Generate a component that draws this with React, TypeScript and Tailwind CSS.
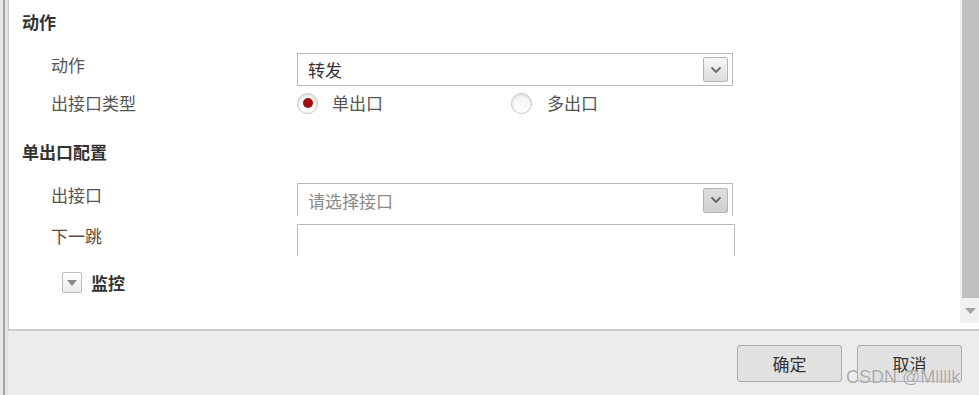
import React from "react";

const cjk = { fontFamily: '"Noto Sans CJK SC", "Liberation Sans", sans-serif' };

function Chevron({ dark }: { dark?: boolean }) {
  return (
    <div
      className={
        "flex h-[25px] w-[25px] items-center justify-center rounded-[2px] border border-[#b4b4b4] " +
        (dark ? "bg-gradient-to-b from-[#dedede] to-[#cfcfcf]" : "bg-gradient-to-b from-[#f6f6f6] to-[#dcdcdc]")
      }
    >
      <svg width="12" height="8" viewBox="0 0 12 8">
        <path d="M1.5 1.5 L6 6 L10.5 1.5" fill="none" stroke="#666" strokeWidth="1.8" />
      </svg>
    </div>
  );
}

function Radio({ checked }: { checked?: boolean }) {
  return (
    <div className="flex h-[21px] w-[21px] items-center justify-center rounded-full border border-[#c4c4c4] bg-gradient-to-b from-[#f2f2f2] to-white shadow-[inset_0_1px_2px_rgba(0,0,0,0.12)]">
      {checked && <div className="h-[10px] w-[10px] rounded-full bg-[#a30d0d]" />}
    </div>
  );
}

export default function App() {
  return (
    <div className="relative flex h-[395px] w-[979px] overflow-hidden bg-[#ececec] text-[17px]" style={cjk}>
      <div className="w-[3px] shrink-0 bg-[#e8e8e8]" />
      <div className="w-[2px] shrink-0 bg-[#a4a4a4]" />
      <div className="w-[3px] shrink-0 bg-[#e3e3e3]" />
      <div className="flex min-w-0 flex-1 flex-col">
        {/* panel */}
        <div className="flex h-[331px] shrink-0 border-b-2 border-l border-[#cbcbcb] bg-white">
          <div className="flex min-w-0 flex-1 flex-col pl-[13px]">
            <div className="flex h-[42px] items-center font-bold leading-none text-[#333]">动作</div>

            <div className="mt-[11px] flex items-start">
              <div className="ml-[29px] w-[246px] leading-[24px] text-[#555]">动作</div>
              <div className="flex h-[33px] w-[436px] items-center justify-between border border-[#b9b9b9] pl-[10px] pr-[4px]">
                <span className="leading-none text-[#333]">转发</span>
                <Chevron />
              </div>
            </div>

            <div className="mt-[5px] flex h-[24px] items-center">
              <div className="ml-[29px] w-[246px] leading-[24px] text-[#555]">出接口类型</div>
              <div className="flex w-[214px] items-center">
                <Radio checked />
                <span className="ml-[14px] text-[#555]">单出口</span>
              </div>
              <div className="flex items-center">
                <Radio />
                <span className="ml-[15px] text-[#555]">多出口</span>
              </div>
            </div>

            <div className="mt-[15px] flex h-[42px] items-center font-bold leading-none text-[#333]">单出口配置</div>

            <div className="mt-[11px] flex items-start">
              <div className="ml-[29px] w-[246px] leading-[24px] text-[#555]">出接口</div>
              <div className="flex h-[33px] w-[436px] items-center justify-between border border-b-0 border-[#b9b9b9] pl-[10px] pr-[4px]">
                <span className="leading-none text-[#8a8a8a]">请选择接口</span>
                <Chevron dark />
              </div>
            </div>

            <div className="mt-[8px] flex items-start">
              <div className="ml-[29px] w-[246px] leading-[24px] text-[#5a4a40]">下一跳</div>
              <div className="h-[32px] w-[438px] border border-b-0 border-[#b9b9b9]" />
            </div>

            <div className="mt-[16px] flex items-center">
              <div className="ml-[40px] flex h-[21px] w-[20px] items-center justify-center rounded-[2px] border border-[#bdbdbd] bg-gradient-to-b from-white to-[#ececec]">
                <svg width="10" height="6" viewBox="0 0 10 6">
                  <path d="M0 0 L10 0 L5 6 Z" fill="#8a8a8a" />
                </svg>
              </div>
              <span className="ml-[9px] font-bold leading-none text-[#333]">监控</span>
            </div>
          </div>

          {/* scrollbar */}
          <div className="flex w-[19px] shrink-0 flex-col">
            <div className="flex h-[323px] flex-col bg-[#f0f0f0]">
              <div className="ml-[2px] h-[298px] bg-[#c1c1c1]" />
              <div className="flex flex-1 items-center justify-center pl-[2px]">
                <svg width="11" height="6" viewBox="0 0 11 6">
                  <path d="M0 0 L11 0 L5.5 6 Z" fill="#a3a3a3" />
                </svg>
              </div>
            </div>
          </div>
        </div>

        {/* footer */}
        <div className="flex flex-1 justify-end gap-[15px] pr-[17px] pt-[14px]">
          <button className="flex h-[37px] w-[105px] items-center justify-center rounded-[3px] border border-[#adadad] bg-[#e1e1e1] text-[17px] text-[#333]" style={cjk}>
            确定
          </button>
          <button className="flex h-[37px] w-[105px] items-center justify-center rounded-[3px] border border-[#adadad] bg-[#e1e1e1] text-[17px] text-[#333]" style={cjk}>
            取消
          </button>
        </div>
      </div>

      <div
        className="pointer-events-none absolute left-[846px] top-[367px] text-[18px] leading-[20px] text-[#a9a9a9] [text-shadow:0_0_1px_#fff]"
        style={{ fontFamily: '"Liberation Sans", Arial, sans-serif' }}
      >
        CSDN @Mllllk
      </div>
    </div>
  );
}
